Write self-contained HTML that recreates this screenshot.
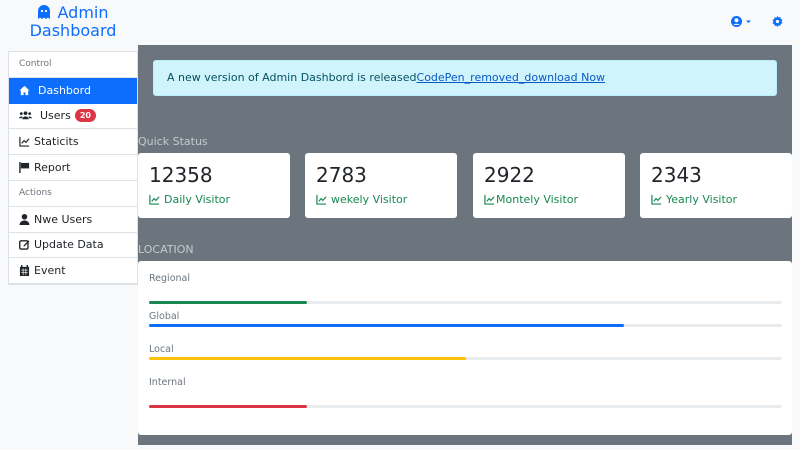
<!DOCTYPE html>
<html><head><meta charset="utf-8"><style>
*{box-sizing:border-box;margin:0;padding:0}
body{width:800px;height:450px;background:#f8f9fa;font-family:"DejaVu Sans","Liberation Sans",sans-serif;position:relative;overflow:hidden;color:#212529}
.abs{position:absolute}
.title{left:20px;top:4px;width:106px;text-align:center;color:#0d6efd;font-size:16px;line-height:18px}
.side{left:8px;top:51px;width:130px;background:#fff;border:1px solid #dee2e6}
.it{height:25.8px;border-bottom:1px solid #dee2e6;font-size:11px;display:flex;align-items:center;padding-left:10px;color:#212529}
.hd{color:#6c757d;font-size:9px;padding-left:10px}
.act{background:#0d6efd;color:#fff;border-color:#0d6efd}
.ic{width:11px;height:11px;margin-right:4px;flex:none}
.badge{background:#dc3545;color:#fff;font-size:8px;font-weight:bold;border-radius:7px;padding:2px 5px;margin-left:4px}
.main{left:138px;top:45px;width:654px;height:400px;background:#6c757d}
.alert{left:15px;top:15px;width:624px;height:36px;background:#cff4fc;border:1px solid #b6effb;border-radius:3px;font-size:11px;color:#055160;padding-left:13px;line-height:34px}
.alert a{color:#0a58ca;text-decoration:underline}
.lbl{font-size:11px;color:#c4c9ce}
.card{top:108px;width:152px;height:65px;background:#fff;border-radius:3px}
.num{position:absolute;left:11px;top:10px;font-size:20px;color:#212529}
.sub{position:absolute;left:11px;top:40px;font-size:11px;color:#198754;display:flex;align-items:center}
.loc{left:0;top:216px;width:654px;height:174px;background:#fff;border-radius:3px}
.pl{position:absolute;left:11px;font-size:9.5px;color:#6c757d}
.bar{position:absolute;left:11px;width:633px;height:3px;background:#e9ecef;border-radius:2px}
.bar div{height:3px;border-radius:2px}
</style></head><body>
<div class="abs title"><svg width="12" height="14" viewBox="0 0 12 14" style="vertical-align:-1px;margin-right:8px"><path d="M6 0C2.7 0 0 2.7 0 6v8l2-1.5L4 14l2-1.5L8 14l2-1.5L12 14V6C12 2.7 9.3 0 6 0z" fill="#0d6efd"/><circle cx="4" cy="6" r="1.1" fill="#fff"/><circle cx="8" cy="6" r="1.1" fill="#fff"/></svg>Admin<br>Dashboard</div>
<svg class="abs" style="left:731px;top:16px" width="22" height="11" viewBox="0 0 22 11"><circle cx="5.5" cy="5.5" r="5.5" fill="#0d6efd"/><circle cx="5.5" cy="4.3" r="2" fill="#fff"/><path d="M2.3 9a4 3 0 0 1 6.4 0" fill="#fff"/><path d="M15 4.5h5l-2.5 2.5z" fill="#0d6efd"/></svg>
<svg class="abs" style="left:772px;top:16px" width="11" height="11" viewBox="0 0 12 12"><path d="M6 0l1.2 1.6 2-.5.3 2 1.9.9-.9 1.9.9 1.9-1.9.9-.3 2-2-.5L6 12l-1.2-1.6-2 .5-.3-2-1.9-.9.9-1.9-.9-1.9 1.9-.9.3-2 2 .5z" fill="#0d6efd"/><circle cx="6" cy="6" r="1.8" fill="#fff"/></svg>
<div class="abs side">
<div class="it hd">Control</div>
<div class="it act"><svg class="ic" viewBox="0 0 12 12" style="margin-right:8px"><path d="M6 1L0.5 6H2v5h3V8h2v3h3V6h1.5z" fill="#fff"/></svg>Dashbord</div>
<div class="it"><svg class="ic" viewBox="0 0 14 10" style="width:13px;margin-right:8px"><circle cx="7" cy="2.5" r="2" fill="#212529"/><circle cx="2.5" cy="3" r="1.5" fill="#212529"/><circle cx="11.5" cy="3" r="1.5" fill="#212529"/><path d="M3.5 9a3.5 3 0 0 1 7 0zM0 8a2.5 2 0 0 1 4-1.5L3 8zM14 8a2.5 2 0 0 0-4-1.5L11 8z" fill="#212529"/></svg>Users<span class="badge">20</span></div>
<div class="it"><svg class="ic" viewBox="0 0 12 12"><path d="M1 1v10h10" stroke="#212529" fill="none" stroke-width="1.3"/><path d="M3 8l2.5-3 2 2L11 3" stroke="#212529" fill="none" stroke-width="1.3"/></svg>Staticits</div>
<div class="it"><svg class="ic" viewBox="0 0 12 12"><path d="M1 0v12" stroke="#212529" stroke-width="1.5"/><path d="M2 1h9v6H2z" fill="#212529"/></svg>Report</div>
<div class="it hd">Actions</div>
<div class="it"><svg class="ic" viewBox="0 0 12 12"><circle cx="6" cy="3" r="3" fill="#212529"/><path d="M0.5 12a5.5 5 0 0 1 11 0z" fill="#212529"/></svg>Nwe Users</div>
<div class="it"><svg class="ic" viewBox="0 0 12 12"><rect x="0.8" y="2" width="9" height="9" rx="1.5" stroke="#212529" fill="none" stroke-width="1.5"/><path d="M5 7l5.5-5.5 1 1L6 8H5z" fill="#212529"/></svg>Update Data</div>
<div class="it"><svg class="ic" viewBox="0 0 12 12"><path d="M1 2h10v10H1z" fill="#212529"/><path d="M3 0v3M9 0v3" stroke="#212529" stroke-width="1.5"/><path d="M2.5 5.5h7M2.5 8h7M4.5 4v7M7.5 4v7" stroke="#fff" stroke-width=".7"/></svg>Event</div>
</div>
<div class="abs main">
<div class="abs alert">A new version of Admin Dashbord is released<a>CodePen_removed_download Now</a></div>
<div class="abs lbl" style="left:0;top:90px">Quick Status</div>
<div class="abs card" style="left:0"><div class="num">12358</div><div class="sub"><svg class="ic" viewBox="0 0 12 12"><path d="M1 1v10h10" stroke="#198754" fill="none" stroke-width="1.3"/><path d="M3 8l2.5-3 2 2L11 3" stroke="#198754" fill="none" stroke-width="1.3"/></svg>Daily Visitor</div></div>
<div class="abs card" style="left:167px"><div class="num">2783</div><div class="sub"><svg class="ic" viewBox="0 0 12 12"><path d="M1 1v10h10" stroke="#198754" fill="none" stroke-width="1.3"/><path d="M3 8l2.5-3 2 2L11 3" stroke="#198754" fill="none" stroke-width="1.3"/></svg>wekely Visitor</div></div>
<div class="abs card" style="left:335px"><div class="num">2922</div><div class="sub"><svg class="ic" viewBox="0 0 12 12" style="margin-right:1px"><path d="M1 1v10h10" stroke="#198754" fill="none" stroke-width="1.3"/><path d="M3 8l2.5-3 2 2L11 3" stroke="#198754" fill="none" stroke-width="1.3"/></svg>Montely Visitor</div></div>
<div class="abs card" style="left:502px"><div class="num">2343</div><div class="sub"><svg class="ic" viewBox="0 0 12 12"><path d="M1 1v10h10" stroke="#198754" fill="none" stroke-width="1.3"/><path d="M3 8l2.5-3 2 2L11 3" stroke="#198754" fill="none" stroke-width="1.3"/></svg>Yearly Visitor</div></div>
<div class="abs lbl" style="left:0;top:198px">LOCATION</div>
<div class="abs loc">
<div class="pl" style="top:12px">Regional</div>
<div class="bar" style="top:40px"><div style="width:25%;background:#198754"></div></div>
<div class="pl" style="top:50px">Global</div>
<div class="bar" style="top:63px"><div style="width:75%;background:#0d6efd"></div></div>
<div class="pl" style="top:83px">Local</div>
<div class="bar" style="top:96px"><div style="width:50%;background:#ffc107"></div></div>
<div class="pl" style="top:116px">Internal</div>
<div class="bar" style="top:144px"><div style="width:25%;background:#dc3545"></div></div>
</div>
</div>
</body></html>
